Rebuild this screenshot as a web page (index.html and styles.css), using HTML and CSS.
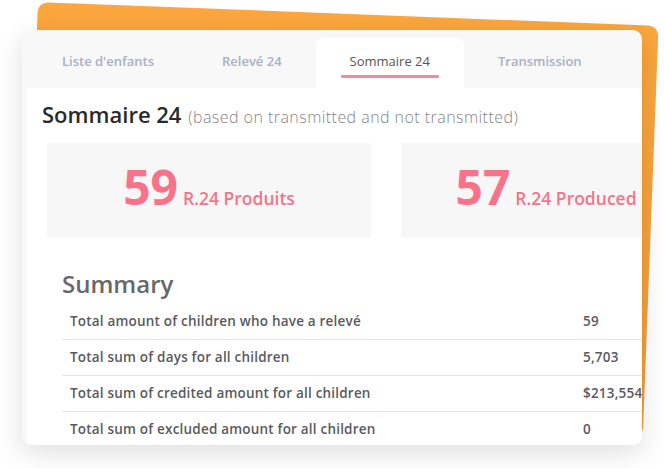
FILE: index.html
```html
<!DOCTYPE html>
<html lang="fr">
<head>
<meta charset="utf-8">
<title>Sommaire 24</title>
<link rel="stylesheet" href="styles.css">
</head>
<body>
<div class="stage">
  <div class="backcard"></div>
  <div class="card">
    <nav class="tabs">
      <div class="tab">Liste d'enfants</div>
      <div class="tab">Relevé 24</div>
      <div class="tab active">Sommaire 24</div>
      <div class="tab">Transmission</div>
    </nav>
    <main class="panel">
      <h1 class="title">Sommaire 24 <span class="sub">(based on transmitted and not transmitted)</span></h1>
      <div class="stats">
        <div class="stat"><span class="num">59</span><span class="label">R.24 Produits</span></div>
        <div class="stat"><span class="num">57</span><span class="label">R.24 Produced</span></div>
      </div>
      <section class="summary">
        <h2 class="summary-title">Summary</h2>
        <table class="sum-table">
          <tr><td class="lbl">Total amount of children who have a relevé</td><td class="val">59</td></tr>
          <tr><td class="lbl">Total sum of days for all children</td><td class="val">5,703</td></tr>
          <tr><td class="lbl">Total sum of credited amount for all children</td><td class="val">$213,554.00</td></tr>
          <tr><td class="lbl">Total sum of excluded amount for all children</td><td class="val">0</td></tr>
        </table>
      </section>
    </main>
  </div>
</div>
</body>
</html>
```

FILE: styles.css
```css
* { box-sizing: border-box; }
html, body { margin: 0; padding: 0; background: #fff; }
body {
  font-family: "Open Sans", "Noto Sans", sans-serif;
  width: 664px;
  height: 468px;
  overflow: hidden;
}
.stage {
  position: relative;
  padding: 30px 0 0 22px;
}
.backcard {
  position: absolute;
  left: 38px;
  top: 2px;
  width: 621px;
  height: 412px;
  border-radius: 10px;
  background: linear-gradient(180deg, #fba63e 0%, #f59d34 100%);
  transform: rotate(2.2deg);
  transform-origin: 0 0;
}
.card {
  position: relative;
  width: 620px;
  height: 415px;
  border-radius: 9px;
  background: #f8f8f9;
  box-shadow: 0 8px 28px rgba(0, 0, 0, 0.13);
  display: flex;
  flex-direction: column;
  overflow: hidden;
}
.tabs {
  display: flex;
  padding: 8px 0 0 6px;
  height: 58px;
  flex: none;
}
.tab {
  padding: 15px 34px 0;
  font-size: 13px;
  font-weight: 600;
  line-height: 16px;
  color: #a9afc4;
  white-space: nowrap;
  border-radius: 7px 7px 0 0;
}
.tab.active {
  background: #fff;
  color: #555558;
  font-weight: 500;
}
.tab.active::after {
  content: "";
  display: block;
  height: 3px;
  margin: 6px -9px 0;
  background: #ee8e9c;
  border-radius: 1px;
}
.panel {
  flex: 1;
  margin-left: 5px;
  background: #fff;
  overflow: hidden;
  padding: 12px 0 0 15px;
}
.title {
  margin: 0;
  font-size: 22px;
  line-height: 28px;
  font-weight: 600;
  color: #2a2a2c;
  white-space: nowrap;
}
.sub {
  font-size: 16px;
  letter-spacing: 0.45px;
  font-weight: 300;
  color: #85858a;
  margin-left: 1px;
}
.stats {
  margin: 12px 0 0 5px;
  display: grid;
  grid-template-columns: 324px 290px;
  gap: 30px;
  width: 700px;
}
.stat {
  height: 95px;
  background: #f7f7f7;
  display: flex;
  justify-content: center;
  align-items: baseline;
  padding-top: 16px;
  color: #f7738a;
  white-space: nowrap;
}
.num {
  font-size: 48px;
  font-weight: 700;
  line-height: 56px;
  margin-right: 5px;
}
.label {
  font-size: 17.5px;
  font-weight: 600;
}
.summary {
  margin: 30px 0 0 20px;
}
.summary-title {
  margin: 0;
  font-size: 24px;
  line-height: 32px;
  font-weight: 600;
  color: #68686c;
}
.sum-table {
  margin-top: 3px;
  border-collapse: collapse;
  width: 640px;
}
.sum-table td {
  height: 36px;
  padding: 0 0 0 8px;
  font-size: 13.5px;
  letter-spacing: 0.2px;
  font-weight: 600;
  color: #5a5a5e;
  white-space: nowrap;
  border-top: 1px solid #e6e6ea;
}
.sum-table tr:first-child td { border-top: none; }
.sum-table .lbl { width: 513px; }
```
